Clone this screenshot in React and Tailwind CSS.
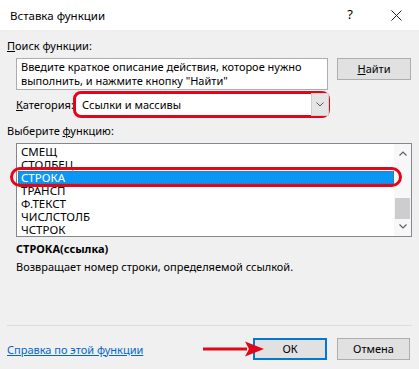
export default function App() {
  const items = ["СМЕЩ", "СТОЛБЕЦ", "СТРОКА", "ТРАНСП", "Ф.ТЕКСТ", "ЧИСЛСТОЛБ", "ЧСТРОК"];
  return (
    <div className="relative w-[419px] h-[369px] overflow-hidden bg-[#f0f0f0] text-[11px] text-black font-['Noto_Sans',sans-serif]">
      {/* title bar */}
      <div className="flex h-[30px] items-center bg-white">
        <div className="pl-[10px] text-[11.5px] leading-[15px]">Вставка функции</div>
        <div className="ml-auto flex h-full">
          <div className="flex w-[46px] items-center justify-center text-[13px]">?</div>
          <div className="flex w-[46px] items-center justify-center">
            <svg width="11" height="11" viewBox="0 0 11 11">
              <path d="M0.5 0.5 L10.5 10.5 M10.5 0.5 L0.5 10.5" stroke="#222" strokeWidth="1" fill="none" />
            </svg>
          </div>
        </div>
      </div>

      <div className="ml-[7px] mt-[8px] leading-[15px]">
        <span className="underline">П</span>оиск функции:
      </div>

      <div className="mt-[5px] flex items-start">
        <div className="ml-[16px] h-[32px] w-[312px] border border-[#abadb3] bg-white pl-[4px] pt-[1px] leading-[14px]">
          Введите краткое описание действия, которое нужно выполнить, и нажмите кнопку "Найти"
        </div>
        <div className="ml-[9px] flex h-[22px] w-[74px] items-center justify-center border border-[#adadad] bg-[#e1e1e1]">
          <span><span className="underline">Н</span>айти</span>
        </div>
      </div>

      <div className="mt-[1px] flex h-[27px] items-center">
        <div className="ml-[16px] w-[57px] leading-[15px]">
          <span className="underline">К</span>атегория:
        </div>
        <div className="flex h-[27px] w-[257px] rounded-[8px] border-[3px] border-[#e2061b] bg-white">
          <div className="flex-1 pl-[6px] leading-[21px]">Ссылки и массивы</div>
          <div className="my-[-1px] mr-[-2px] flex w-[18px] items-center justify-center border border-[#cfcfcf] bg-[#e5e5e5]">
            <svg width="8" height="5" viewBox="0 0 8 5">
              <path d="M0.5 0.5 L4 4 L7.5 0.5" stroke="#555" strokeWidth="1" fill="none" />
            </svg>
          </div>
        </div>
      </div>

      <div className="ml-[7px] mt-[5px] leading-[15px]">
        Выберите <span className="underline">ф</span>ункцию:
      </div>

      <div className="ml-[16px] mt-[5px] flex h-[94px] w-[396px] border border-[#828790] bg-white">
        <div className="flex-1 pt-[1px] text-[11.5px]">
          {items.map((it, i) =>
            i === 2 ? (
              <div key={it} className="ml-[1px] h-[13px] border border-dotted border-[#666] bg-[#0a96f7] pl-[2px] leading-[11px] text-white">
                {it}
              </div>
            ) : (
              <div key={it} className="h-[13px] pl-[4px] leading-[13px]">
                {it}
              </div>
            )
          )}
        </div>
        <div className="flex w-[17px] flex-col items-center bg-[#f7f7f7]">
          <div className="flex h-[17px] w-full items-center justify-center pt-[2px]">
            <svg width="8" height="5" viewBox="0 0 8 5">
              <path d="M0.5 4.5 L4 1 L7.5 4.5" stroke="#606060" strokeWidth="1.2" fill="none" />
            </svg>
          </div>
          <div className="mt-[37px] h-[21px] w-[15px] bg-[#cdcdcd]" />
          <div className="mt-auto flex h-[17px] w-full items-center justify-center pb-[2px]">
            <svg width="8" height="5" viewBox="0 0 8 5">
              <path d="M0.5 0.5 L4 4 L7.5 0.5" stroke="#606060" strokeWidth="1.2" fill="none" />
            </svg>
          </div>
        </div>
      </div>

      <div className="ml-[16px] mt-[4px] font-bold leading-[15px]">СТРОКА(ссылка)</div>
      <div className="ml-[16px] mt-[3px] leading-[15px]">Возвращает номер строки, определяемой ссылкой.</div>

      <div className="mx-[7px] mt-[51px] h-px bg-[#dcdcdc]" />

      <div className="mt-[12px] flex items-center">
        <div className="ml-[7px] text-[#0066cc] underline leading-[15px]">Справка по этой функции</div>
        <div className="ml-auto flex h-[22px] w-[74px] items-center justify-center border-2 border-[#0078d7] bg-[#e1e1e1]">
          ОК
        </div>
        <div className="ml-[10px] mr-[9px] flex h-[22px] w-[73px] items-center justify-center border border-[#adadad] bg-[#e1e1e1]">
          Отмена
        </div>
      </div>

      {/* red highlight around selected item */}
      <div className="absolute left-[10px] top-[167px] h-[20px] w-[392px] rounded-full border-[3px] border-[#e2061b]" />

      {/* red arrow */}
      <svg className="absolute left-[203px] top-[341px]" width="62" height="16" viewBox="0 0 62 16">
        <rect x="0" y="6.5" width="44" height="3" fill="#e2061b" />
        <polygon points="42,0.5 61,8 42,15.5 46,8" fill="#e2061b" />
      </svg>
    </div>
  );
}
